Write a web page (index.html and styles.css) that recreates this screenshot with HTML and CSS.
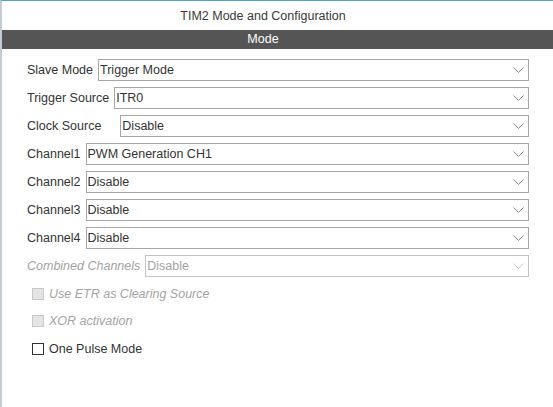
FILE: index.html
```html
<!DOCTYPE html>
<html lang="en">
<head>
    <meta charset="UTF-8">
    <title>TIM2 Mode and Configuration</title>
    <link rel="stylesheet" href="styles.css">
</head>
<body>
    <div class="panel">
        <div class="title">TIM2 Mode and Configuration</div>
        <div class="section-bar">Mode</div>
        <div class="form">
            <div class="row">
                <span class="label">Slave Mode</span>
                <div class="combo"><span>Trigger Mode</span><svg class="chevron" width="11" height="6" viewBox="0 0 11 6"><polyline points="0.5,0.5 5.5,5.5 10.5,0.5"/></svg></div>
            </div>
            <div class="row">
                <span class="label">Trigger Source</span>
                <div class="combo"><span>ITR0</span><svg class="chevron" width="11" height="6" viewBox="0 0 11 6"><polyline points="0.5,0.5 5.5,5.5 10.5,0.5"/></svg></div>
            </div>
            <div class="row">
                <span class="label label-clock">Clock Source</span>
                <div class="combo"><span>Disable</span><svg class="chevron" width="11" height="6" viewBox="0 0 11 6"><polyline points="0.5,0.5 5.5,5.5 10.5,0.5"/></svg></div>
            </div>
            <div class="row">
                <span class="label">Channel1</span>
                <div class="combo"><span>PWM Generation CH1</span><svg class="chevron" width="11" height="6" viewBox="0 0 11 6"><polyline points="0.5,0.5 5.5,5.5 10.5,0.5"/></svg></div>
            </div>
            <div class="row">
                <span class="label">Channel2</span>
                <div class="combo"><span>Disable</span><svg class="chevron" width="11" height="6" viewBox="0 0 11 6"><polyline points="0.5,0.5 5.5,5.5 10.5,0.5"/></svg></div>
            </div>
            <div class="row">
                <span class="label">Channel3</span>
                <div class="combo"><span>Disable</span><svg class="chevron" width="11" height="6" viewBox="0 0 11 6"><polyline points="0.5,0.5 5.5,5.5 10.5,0.5"/></svg></div>
            </div>
            <div class="row">
                <span class="label">Channel4</span>
                <div class="combo"><span>Disable</span><svg class="chevron" width="11" height="6" viewBox="0 0 11 6"><polyline points="0.5,0.5 5.5,5.5 10.5,0.5"/></svg></div>
            </div>
            <div class="row disabled">
                <span class="label">Combined Channels</span>
                <div class="combo"><span>Disable</span><svg class="chevron" width="11" height="6" viewBox="0 0 11 6"><polyline points="0.5,0.5 5.5,5.5 10.5,0.5"/></svg></div>
            </div>

            <div class="checks">
                <div class="check disabled"><span class="box"></span>Use ETR as Clearing Source</div>
                <div class="check disabled"><span class="box"></span>XOR activation</div>
                <div class="check"><span class="box"></span>One Pulse Mode</div>
            </div>
        </div>
    </div>
</body>
</html>
```

FILE: styles.css
```css
body {
    margin: 0;
    font-family: "Liberation Sans", Arial, sans-serif;
    font-size: 12px;
    color: #333;
    background: #fff;
}
.panel {
    height: 407px;
    box-sizing: border-box;
    border-top: 1px solid #4ca3cc;
    border-left: 2px solid #c3ccd4;
}
.title {
    height: 29px;
    line-height: 30px;
    text-align: center;
    padding-right: 29px;
    color: #3a3a3a;
    font-size: 12.5px;
}
.section-bar {
    height: 19px;
    line-height: 19px;
    background-color: #545554;
    color: #fff;
    text-align: center;
    padding-right: 29px;
    font-size: 12.5px;
}
.form {
    padding: 10px 24px 0 25px;
    font-size: 12.5px;
}
.row {
    display: flex;
    align-items: center;
    gap: 5px;
    margin-bottom: 6px;
}
.label {
    white-space: nowrap;
}
.label-clock {
    margin-right: 14px;
}
.combo {
    flex: 1;
    display: flex;
    align-items: center;
    justify-content: space-between;
    height: 22px;
    box-sizing: border-box;
    border: 1px solid #a6a6a6;
    padding: 0 4px 0 1px;
    color: #333;
    background: #fff;
}
.chevron polyline {
    fill: none;
    stroke: #8c8c8c;
    stroke-width: 1;
}
.row.disabled .label {
    font-style: italic;
    color: #a3a3a3;
}
.row.disabled .combo {
    border-color: #c4c4c4;
    color: #a3a3a3;
}
.row.disabled .chevron polyline {
    stroke: #cfcfcf;
}
.checks {
    display: flex;
    flex-direction: column;
    gap: 6px;
    margin-top: 6px;
}
.check {
    display: flex;
    align-items: center;
    gap: 5px;
    height: 21.5px;
    padding-left: 5px;
}
.box {
    width: 12px;
    height: 12px;
    box-sizing: border-box;
    border: 1px solid #333;
    background: #fff;
}
.check.disabled {
    font-style: italic;
    color: #a3a3a3;
}
.check.disabled .box {
    border-color: #c8c8c8;
    background: #e4e4e4;
}
```
